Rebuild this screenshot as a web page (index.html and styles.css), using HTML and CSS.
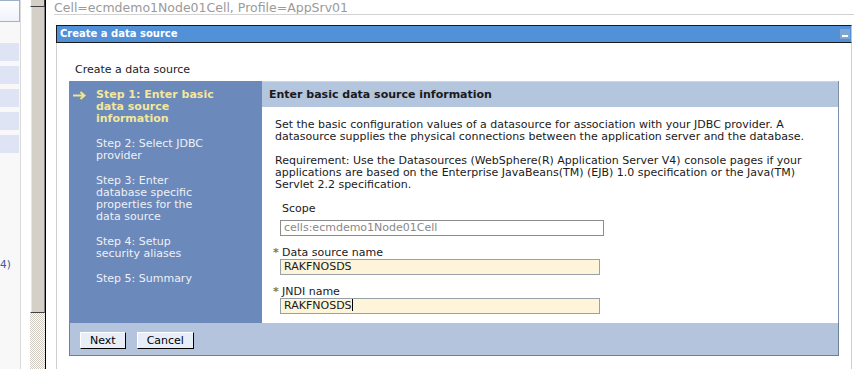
FILE: index.html
```html
<!DOCTYPE html>
<html lang="en">
<head>
  <meta charset="UTF-8" />
  <title>Create a data source</title>
  <link rel="stylesheet" href="styles.css">
</head>
<body>
  <!-- Navegacion izquierda (recortada) -->
  <div class="nav">
    <div class="nav-top"></div>
    <div class="nav-item"></div>
    <div class="nav-item"></div>
    <div class="nav-item"></div>
    <div class="nav-item"></div>
    <div class="nav-item"></div>
    <div class="nav-link">4)</div>
  </div>

  <div class="scroll">
    <div class="scroll-btn"></div>
    <div class="scroll-thumb"></div>
    <div class="scroll-track"></div>
  </div>

  <div class="main">
    <div class="crumb">Cell=ecmdemo1Node01Cell, Profile=AppSrv01</div>

    <div class="panel">
      <div class="panel-title">
        <span>Create a data source</span>
        <span class="minimize"></span>
      </div>
      <div class="panel-body">
        <div class="page-title">Create a data source</div>

        <div class="wizard">
          <div class="steps">
            <div class="step current">
              <svg class="arrow" width="13" height="9" viewBox="0 0 13 9">
                <path d="M0 4.5H11M7.5 1L11.5 4.5L7.5 8" fill="none" stroke="#f2e58f" stroke-width="2"/>
              </svg>
              Step 1: Enter basic data source information
            </div>
            <div class="step">Step 2: Select JDBC provider</div>
            <div class="step">Step 3: Enter database specific properties for the data source</div>
            <div class="step">Step 4: Setup security aliases</div>
            <div class="step">Step 5: Summary</div>
          </div>

          <div class="content">
            <div class="content-head">Enter basic data source information</div>
            <div class="content-body">
              <p>Set the basic configuration values of a datasource for association with your JDBC provider. A datasource supplies the physical connections between the application server and the database.</p>
              <p>Requirement: Use the Datasources (WebSphere(R) Application Server V4) console pages if your applications are based on the Enterprise JavaBeans(TM) (EJB) 1.0 specification or the Java(TM) Servlet 2.2 specification.</p>

              <div class="field first">
                <div class="label">Scope</div>
                <div class="input readonly">cells:ecmdemo1Node01Cell</div>
              </div>
              <div class="field">
                <div class="label"><span class="req">*</span>Data source name</div>
                <div class="input required">RAKFNOSDS</div>
              </div>
              <div class="field">
                <div class="label"><span class="req">*</span>JNDI name</div>
                <div class="input required">RAKFNOSDS<span class="caret"></span></div>
              </div>
            </div>
          </div>

          <div class="buttons">
            <button class="btn">Next</button>
            <button class="btn">Cancel</button>
          </div>
        </div>
      </div>
    </div>
  </div>
</body>
</html>
```

FILE: styles.css
```css
* { box-sizing: border-box; margin: 0; padding: 0; }

body {
  font-family: "DejaVu Sans", Verdana, sans-serif;
  font-size: 11px;
  color: #1a1a1a;
  background: #fff;
  width: 854px;
  height: 369px;
  overflow: hidden;
  display: flex;
}

/* Navegacion */
.nav {
  width: 21px;
  background: #f8f8f8;
  border-right: 1px solid #dadada;
  margin-right: 9px;
}

.nav-top {
  height: 22px;
  background: linear-gradient(to bottom, #fff, #eef2fa);
  border: 1px solid #9fb0cc;
  border-left: none;
  margin-bottom: 21px;
}

.nav-item {
  height: 18px;
  background: #dfe4f4;
  margin-bottom: 5px;
  margin-right: 1px;
}

.nav-link {
  margin-top: 105px;
  color: #3b5b9b;
  font-size: 10.5px;
}

/* Barra de desplazamiento */
.scroll {
  width: 16px;
  border-right: 1px solid #000;
  display: flex;
  flex-direction: column;
}

.scroll-btn {
  height: 7px;
  background: #d4d0c8;
  border: 1px solid #404040;
  border-top: none;
  border-left-color: #fff;
}

.scroll-thumb {
  height: 306px;
  background: #d4d0c8;
  border-left: 1px solid #fff;
  border-right: 1px solid #808080;
  border-bottom: 1px solid #404040;
  box-shadow: inset 1px 0 0 #e8e6e1;
}

.scroll-track {
  flex: 1;
  background-color: #fff;
  background-image: repeating-conic-gradient(#cfcbc3 0% 25%, #fff 0% 50%);
  background-size: 2px 2px;
}

/* Contenido */
.main {
  flex: 1;
  padding-left: 8px;
}

.crumb {
  height: 15px;
  font-size: 12.5px;
  line-height: 15px;
  color: #9a9a9a;
  border-bottom: 1px solid #d2d2d2;
  white-space: nowrap;
  overflow: hidden;
}

.panel {
  margin: 10px 2px 0 2px;
}

.panel-title {
  height: 18px;
  background: #5291d8;
  border: 1px solid #1a1a1a;
  border-right-color: #b8c8e0;
  color: #fff;
  font-weight: bold;
  font-size: 10px;
  line-height: 16px;
  padding-left: 3px;
  display: flex;
  justify-content: space-between;
  align-items: center;
}

.minimize {
  width: 10px;
  height: 10px;
  margin-right: 1px;
  background: #7ea6d5;
  position: relative;
}

.minimize::after {
  content: "";
  position: absolute;
  left: 2px;
  right: 2px;
  bottom: 2px;
  height: 2px;
  background: #fff;
}

.panel-body {
  border: 1px solid #cfcfcf;
  border-top: none;
  padding: 21px 12px 13px 12px;
}

.page-title {
  line-height: 12px;
  margin: 0 0 5px 6px;
}

/* Asistente */
.wizard {
  display: grid;
  grid-template-columns: 193px 1fr;
}

.steps {
  background: #6b89ba;
  padding: 8px 50px 0 3px;
  color: #eef1f7;
  line-height: 12px;
}

.step {
  padding-left: 24px;
  margin-bottom: 13px;
  position: relative;
}

.step.current {
  color: #f2e79a;
  font-weight: bold;
  margin-right: -14px;
}

.arrow {
  position: absolute;
  left: 1px;
  top: 2px;
}

.content {
  border-right: 1px solid #7d8ea8;
  min-height: 238px;
}

.content-head {
  height: 26px;
  background: #b4c5de;
  border-top: 1px solid #c9d5e8;
  font-weight: bold;
  font-size: 11px;
  line-height: 26px;
  padding-left: 7px;
}

.content-body {
  padding: 12px 10px 9px 13px;
  line-height: 12px;
}

.content-body p {
  margin-bottom: 12px;
}

.field {
  margin: 11px 0 0 5px;
}

.field.first {
  margin-top: 10px;
}

.label {
  line-height: 12px;
  padding-left: 2px;
}

.first .label {
  margin-bottom: 5px;
}

.req {
  display: inline-block;
  width: 9px;
  margin-left: -9px;
  color: #8a7a2a;
  font-weight: bold;
}

.input {
  height: 16px;
  border: 1px solid #98a0a8;
  padding-left: 3px;
  line-height: 14px;
}

.input.readonly {
  width: 324px;
  color: #888;
  border-color: #8c8c8c;
}

.input.required {
  width: 320px;
  background: #fdf4d9;
  color: #1a1a1a;
}

.caret {
  display: inline-block;
  width: 1px;
  height: 12px;
  background: #000;
  vertical-align: -2px;
}

.buttons {
  grid-column: 1 / 3;
  height: 33px;
  background: #b4c4dd;
  border: 1px solid #6d7f99;
  border-top: none;
  padding: 9px 0 0 10px;
  display: flex;
  gap: 11px;
  align-items: flex-start;
}

.btn {
  height: 17px;
  padding: 0 9px;
  font-family: "DejaVu Sans", Verdana, sans-serif;
  font-size: 11px;
  color: #000;
  background: #e8eef8;
  border: 1px solid #000;
  border-top-color: #fff;
  border-left-color: #fff;
}
```
